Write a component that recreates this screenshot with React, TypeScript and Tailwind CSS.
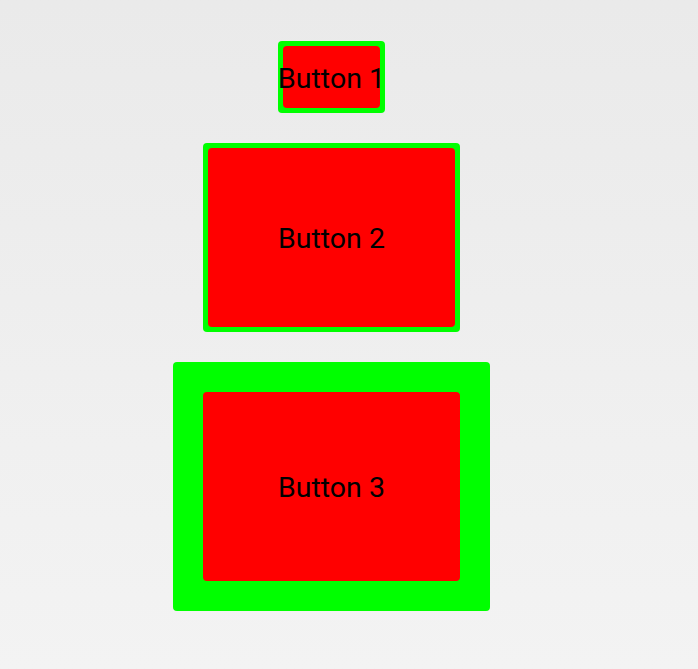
import React from 'react';

type BoxProps = {
    label: string;
    outer: string; // outer green frame size + padding
    inner: string; // red face size
};

function FramedButton({ label, outer, inner }: BoxProps) {
    return (
        <div className={`bg-[#00ff00] rounded-[4px] ${outer}`}>
            <button
                type="button"
                className={`bg-[#ff0000] rounded-[4px] flex items-center justify-center whitespace-nowrap text-[28.5px] text-black leading-none pt-[4px] ${inner}`}
                style={{ fontFamily: 'Roboto, "Noto Sans", sans-serif' }}
            >
                {label}
            </button>
        </div>
    );
}

export default function App() {
    return (
        <div className="min-h-[669px] w-full bg-gradient-to-b from-[#eaeaea] to-[#f3f3f3]">
            <div className="w-[663px] flex flex-col items-center pt-[41px]">
                <FramedButton label="Button 1" outer="p-[5px]" inner="w-[97px] h-[62px]" />
                <div className="mt-[30px]">
                    <FramedButton label="Button 2" outer="p-[5px]" inner="w-[247px] h-[179px]" />
                </div>
                <div className="mt-[30px]">
                    <FramedButton label="Button 3" outer="p-[30px]" inner="w-[257px] h-[189px]" />
                </div>
            </div>
        </div>
    );
}
